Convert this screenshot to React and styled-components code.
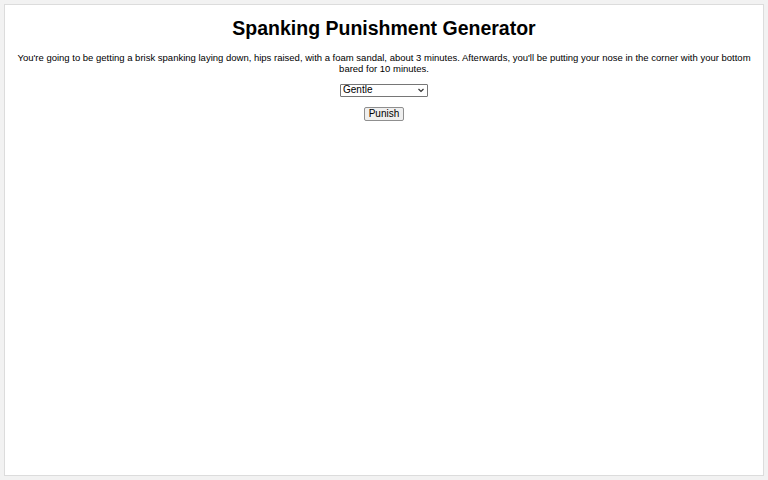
import React, { useState } from 'react'
import styled, { createGlobalStyle } from 'styled-components'

const Global = createGlobalStyle`
  html, body {
    margin: 0;
    height: 100%;
  }
  body {
    background: #f2f2f2;
    font-family: "Liberation Sans", Arial, sans-serif;
    padding: 4px;
    box-sizing: border-box;
  }
  #root { height: 100%; }
`

const Card = styled.div`
  box-sizing: border-box;
  height: 100%;
  background: #fff;
  border: 1px solid #dcdcdc;
  padding: 12px 10px;
  text-align: center;
  color: #000;
`

const Title = styled.h1`
  font-size: 19.5px;
  font-weight: bold;
  margin: 0 0 12px;
`

const Verdict = styled.p`
  font-size: 9.5px;
  line-height: 11px;
  margin: 0 0 10px;
`

const Row = styled.div`
  display: flex;
  justify-content: center;
  margin-bottom: 10px;
`

const SelectWrap = styled.span`
  position: relative;
  display: block;
`

const Select = styled.select`
  appearance: none;
  display: block;
  box-sizing: border-box;
  font-family: inherit;
  font-size: 10px;
  color: #000;
  width: 88px;
  height: 12.5px;
  line-height: 10px;
  padding: 0 0 0 2px;
  border: 1px solid #767676;
  border-radius: 1px;
  background: #fff;
`

const Chevron = styled.svg`
  position: absolute;
  right: 4px;
  top: 4px;
  width: 6px;
  height: 5px;
  pointer-events: none;
`

const Button = styled.button`
  box-sizing: border-box;
  font-family: inherit;
  font-size: 10px;
  color: #000;
  height: 14.5px;
  padding: 0 4px;
  border: 1px solid #8f8f8f;
  border-radius: 2px;
  background: #efefef;
`

export default function App() {
  const [level, setLevel] = useState('Gentle')
  return (
    <>
      <Global />
      <Card>
        <Title>Spanking Punishment Generator</Title>
        <Verdict>
          You're going to be getting a brisk spanking laying down, hips raised, with a foam sandal, about 3 minutes. Afterwards, you'll be putting your nose in the corner with your bottom bared for 10 minutes.
        </Verdict>
        <Row>
          <SelectWrap>
            <Select value={level} onChange={e => setLevel(e.target.value)}>
              <option>Gentle</option>
              <option>Moderate</option>
              <option>Severe</option>
            </Select>
            <Chevron viewBox="0 0 6 5">
              <path d="M0.5 1 L3 3.5 L5.5 1" fill="none" stroke="#333" strokeWidth="1.2" />
            </Chevron>
          </SelectWrap>
        </Row>
        <Row>
          <Button>Punish</Button>
        </Row>
      </Card>
    </>
  )
}
